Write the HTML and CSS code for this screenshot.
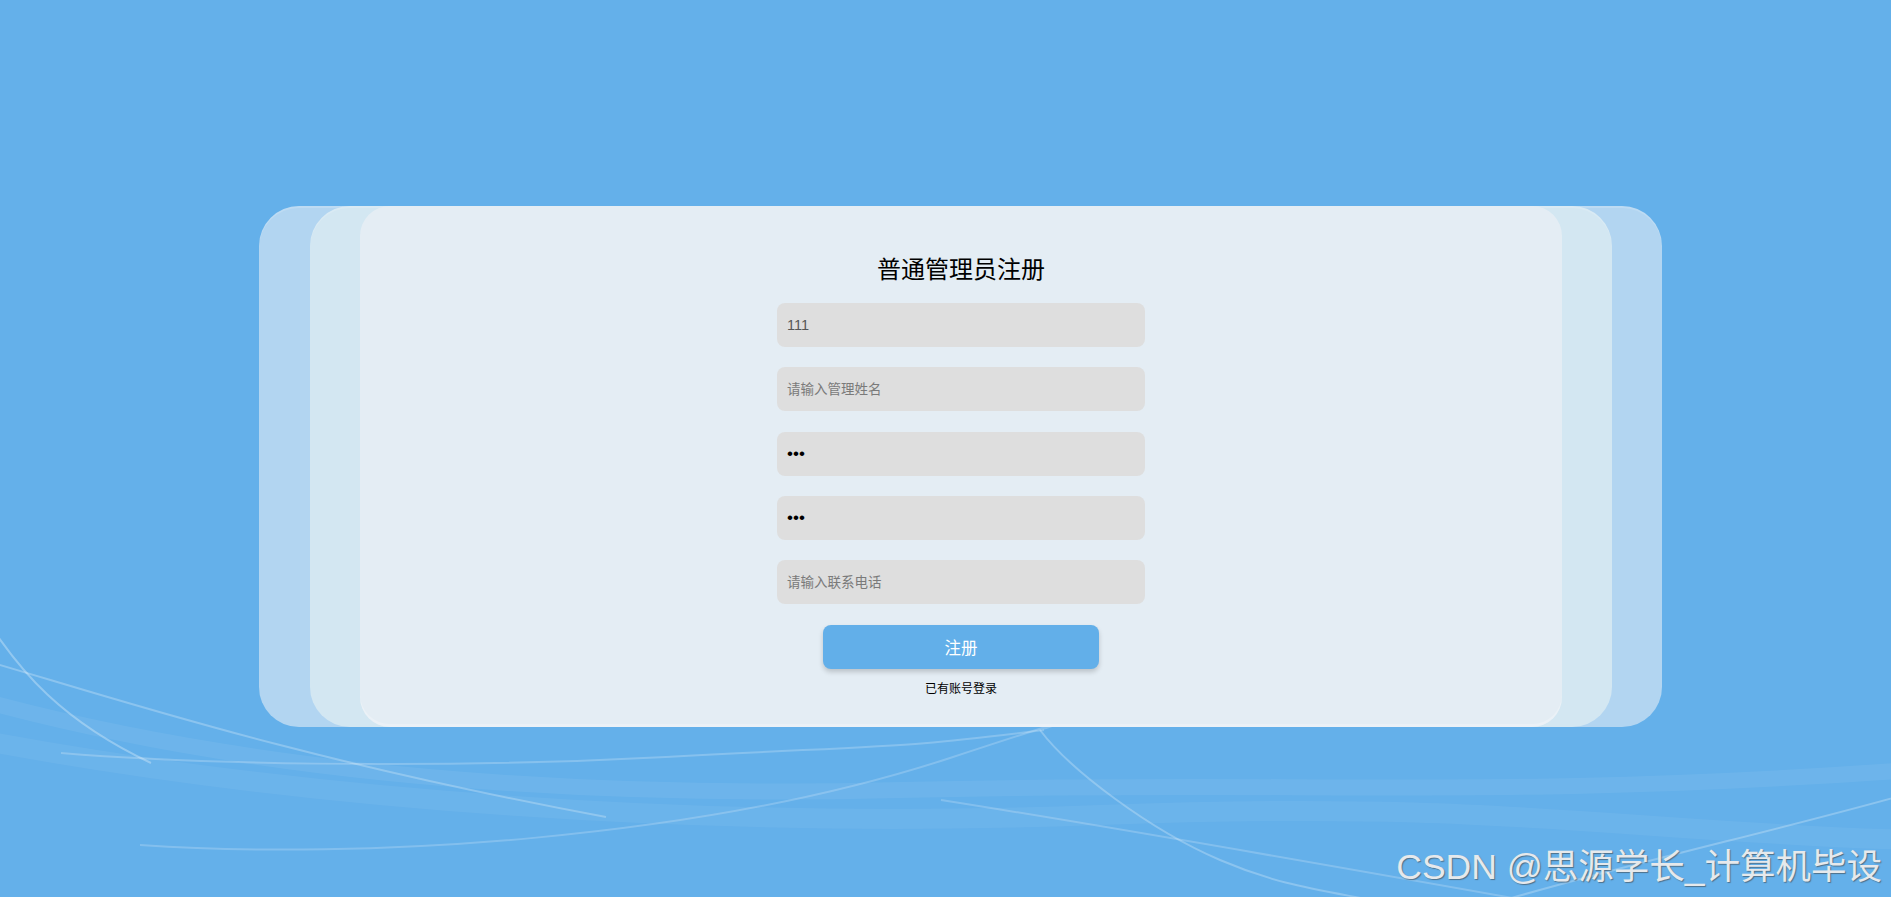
FILE: index.html
```html
<!DOCTYPE html>
<html lang="zh-CN">
<head>
<meta charset="utf-8">
<title>普通管理员注册</title>
<link rel="stylesheet" href="styles.css">
</head>
<body>
<svg class="waves" width="1891" height="897" viewBox="0 0 1891 897" xmlns="http://www.w3.org/2000/svg">
  <g fill="none" stroke="#ffffff">
    <path d="M-10 625 C 20 670, 60 720, 151 763" stroke-opacity="0.3" stroke-width="2"/>
    <path d="M-10 662 C 120 700, 300 760, 606 817" stroke-opacity="0.25" stroke-width="2"/>
    <path d="M61 753 C 180 763, 420 770, 666 757 S 900 748, 1044 730" stroke-opacity="0.22" stroke-width="2"/>
    <path d="M140 845 C 360 860, 700 840, 950 758 S 1030 735, 1044 728" stroke-opacity="0.2" stroke-width="2"/>
    <path d="M1040 730 C 1070 770, 1150 830, 1220 860 S 1330 890, 1420 910" stroke-opacity="0.25" stroke-width="2"/>
    <path d="M941 800 C 1100 825, 1300 860, 1580 910" stroke-opacity="0.2" stroke-width="2"/>
    <path d="M1900 796 C 1760 835, 1620 865, 1470 910" stroke-opacity="0.25" stroke-width="2"/>
    <path d="M-20 700 C 200 760, 500 800, 900 790 S 1500 800, 1910 770" stroke-opacity="0.06" stroke-width="16"/>
    <path d="M-20 740 C 300 800, 700 830, 1100 815 S 1600 830, 1910 840" stroke-opacity="0.05" stroke-width="20"/>
  </g>
</svg>
<main class="page">
  <div class="layer layer-outer">
    <div class="layer layer-middle">
      <div class="layer layer-inner">
        <h1 class="title">普通管理员注册</h1>
        <form class="form">
          <input class="field" type="text" value="111">
          <input class="field" type="text" placeholder="请输入管理姓名">
          <input class="field field-secret" type="password" value="123">
          <input class="field field-secret" type="password" value="123">
          <input class="field" type="text" placeholder="请输入联系电话">
          <button class="submit" type="button">注册</button>
          <a class="login-link" href="#">已有账号登录</a>
        </form>
      </div>
    </div>
  </div>
</main>
<div class="watermark">CSDN @思源学长_计算机毕设</div>
</body>
</html>
```
FILE: styles.css
```css
html, body {
  margin: 0;
  padding: 0;
}
body {
  width: 1891px;
  height: 897px;
  overflow: hidden;
  background: #64b0ea;
  font-family: "Liberation Sans", "Noto Sans CJK SC", sans-serif;
  position: relative;
}
.waves {
  position: absolute;
  left: 0;
  top: 0;
  z-index: 0;
}
.page {
  position: relative;
  z-index: 1;
  display: flex;
  justify-content: center;
  padding: 206px 0 0 30px;
}
.layer {
  box-sizing: border-box;
  height: 521px;
  border-radius: 40px;
}
.layer-outer {
  width: 1403px;
  padding: 0 50px 0 51px;
  background: #b2d5f1;
  box-shadow: inset 0 2px 0 rgba(255,255,255,0.15);
}
.layer-middle {
  padding: 0 50px;
  background: #d3e7f2;
  box-shadow: inset 0 2px 0 rgba(255,255,255,0.15);
}
.layer-inner {
  border-radius: 30px;
  background: #e4edf4;
  display: flex;
  flex-direction: column;
  align-items: center;
  padding-top: 46px;
  box-shadow: inset 0 -3px 0 rgba(255,255,255,0.25);
}
.title {
  margin: 0;
  font-family: "Noto Sans CJK SC", sans-serif;
  font-weight: 400;
  font-size: 24px;
  line-height: 32px;
  color: #000;
}
.form {
  margin-top: 19px;
  display: flex;
  flex-direction: column;
  align-items: center;
}
.field {
  box-sizing: border-box;
  width: 368px;
  height: 44px;
  margin: 0 0 20.25px;
  padding: 0 10px;
  border: none;
  border-radius: 8px;
  background: #dedede;
  font-family: "Liberation Sans", "Noto Sans CJK SC", sans-serif;
  font-size: 14.5px;
  color: #555;
  outline: none;
}
.field-secret {
  color: #000;
  font-size: 17px;
}
.field::placeholder {
  color: #7a7a7a;
  font-family: "Noto Sans CJK SC", sans-serif;
  font-size: 13.5px;
}
.submit {
  width: 276px;
  height: 44px;
  margin-top: 1px;
  border: none;
  border-radius: 8px;
  background: #62afe9;
  color: #fff;
  font-family: "Noto Sans CJK SC", sans-serif;
  font-size: 16.5px;
  box-shadow: 0 3px 5px rgba(0,0,0,0.18);
  cursor: pointer;
}
.login-link {
  margin-top: 11px;
  font-family: "Noto Sans CJK SC", sans-serif;
  font-size: 12px;
  line-height: 16px;
  color: #000;
  text-decoration: none;
}
.watermark {
  position: absolute;
  right: 9px;
  bottom: 9px;
  z-index: 2;
  font-family: "Liberation Sans", "Noto Sans CJK SC", sans-serif;
  font-size: 35.5px;
  line-height: 42px;
  color: #e6e9ec;
  text-shadow: 1px 1px 1px rgba(60,60,60,0.55);
  white-space: nowrap;
}
```
